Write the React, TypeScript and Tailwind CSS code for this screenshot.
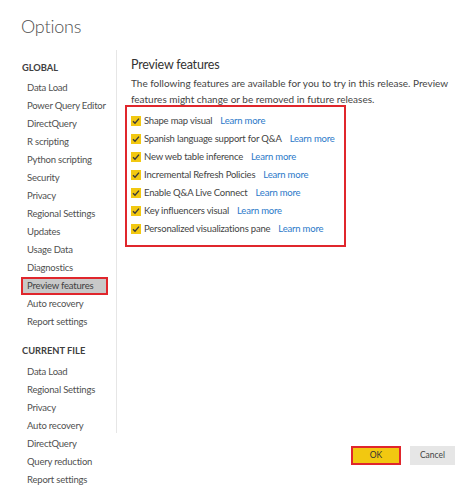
import React from "react";

const globalItems = [
  "Data Load",
  "Power Query Editor",
  "DirectQuery",
  "R scripting",
  "Python scripting",
  "Security",
  "Privacy",
  "Regional Settings",
  "Updates",
  "Usage Data",
  "Diagnostics",
  "Preview features",
  "Auto recovery",
  "Report settings",
];

const fileItems = [
  "Data Load",
  "Regional Settings",
  "Privacy",
  "Auto recovery",
  "DirectQuery",
  "Query reduction",
  "Report settings",
];

const features = [
  "Shape map visual",
  "Spanish language support for Q&A",
  "New web table inference",
  "Incremental Refresh Policies",
  "Enable Q&A Live Connect",
  "Key influencers visual",
  "Personalized visualizations pane",
];

function Check() {
  return (
    <span className="flex h-[10px] w-[10px] shrink-0 items-center justify-center bg-[#f2c811]">
      <svg width="8" height="8" viewBox="0 0 8 8" fill="none">
        <path d="M1 4.2 L3 6.2 L7 1.6" stroke="#3a3a3a" strokeWidth="1.4" />
      </svg>
    </span>
  );
}

export default function App() {
  return (
    <div
      className="relative h-[485px] w-[474px] overflow-hidden whitespace-nowrap bg-white text-[#505050]"
      style={{ fontFamily: 'Lato, "Open Sans", sans-serif' }}
    >
      <div className="h-[50px] pl-[21px] pt-[14px]">
        <h1 className="text-[18px] font-light leading-[24px] tracking-[-0.2px] text-[#505050]">
          Options
        </h1>
      </div>
      <div className="flex h-[435px]">
        <nav className="w-[116px] shrink-0 overflow-hidden pl-[21px] pt-[9px] text-[9.5px] tracking-[-0.2px]">
          <div className="mb-[2px] pl-[1px] text-[9.3px] font-bold leading-[18px] tracking-normal text-[#404040]">
            GLOBAL
          </div>
          {globalItems.map((it) =>
            it === "Preview features" ? (
              <div
                key={it}
                className="h-[18px] w-[87px] border-2 border-[#e0262c] bg-[#c8c8c8] pl-[4px] leading-[14px] text-[#404040]"
              >
                {it}
              </div>
            ) : (
              <div key={it} className="h-[18px] pl-[6px] leading-[18px]">
                {it}
              </div>
            )
          )}
          <div className="mb-[3px] mt-[11px] pl-[1px] text-[9.3px] font-bold leading-[18px] tracking-normal text-[#404040]">
            CURRENT FILE
          </div>
          {fileItems.map((it) => (
            <div key={it} className="h-[18px] pl-[6px] leading-[18px]">
              {it}
            </div>
          ))}
        </nav>
        <div className="h-[383px] w-px shrink-0 bg-[#e6e6e6]" />
        <main className="flex flex-1 flex-col pl-[8px]">
          <h2 className="mt-[6px] pl-[6px] text-[12.5px] leading-[18px] tracking-[-0.2px] text-[#333333]">
            Preview features
          </h2>
          <p className="-mb-[2px] mt-[1px] pl-[6px] text-[10px] leading-[16px] text-[#444444]">
            The following features are available for you to try in this release. Preview
            <br />
            features might change or be removed in future releases.
          </p>
          <div className="w-[221px] border-2 border-[#e0262c] pb-[7px] pl-[4px] pt-[5px]">
            {features.map((f) => (
              <div key={f} className="flex h-[18px] items-center text-[9.5px] tracking-[-0.2px]">
                <Check />
                <span className="ml-[3px] text-[#444444]">{f}</span>
                <span className="ml-[8px] text-[#2b79c9]">Learn more</span>
              </div>
            ))}
          </div>
          <div className="mt-auto flex justify-end gap-[9px] pb-[20px] pr-[19px]">
            <button className="flex h-[19px] w-[50px] items-center justify-center border-2 border-[#e0262c] bg-[#f2c811] text-[8.5px] text-[#333333]">
              OK
            </button>
            <button className="flex h-[19px] w-[45px] items-center justify-center bg-[#e6e6e6] text-[8.5px] text-[#444444]">
              Cancel
            </button>
          </div>
        </main>
      </div>
    </div>
  );
}
